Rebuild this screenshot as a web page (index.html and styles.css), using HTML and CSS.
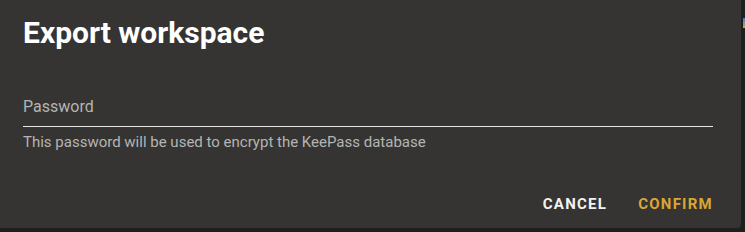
FILE: index.html
```html
<!DOCTYPE html>
<html lang="en">
  <head>
    <meta charset="UTF-8" />
    <meta name="viewport" content="width=device-width, initial-scale=1.0" />
    <title>Export workspace</title>
    <link rel="stylesheet" href="styles.css">
  </head>
  <body>
    <div class="backdrop">
      <div class="dialog">
        <h1 class="dialog-title">Export workspace</h1>

        <div class="field">
          <label class="field-input" for="password">Password</label>
          <div class="field-hint">This password will be used to encrypt the KeePass database</div>
        </div>

        <div class="dialog-actions">
          <button class="btn">Cancel</button>
          <button class="btn btn-primary">Confirm</button>
        </div>
      </div>
      <div class="side-strip">
        <span class="side-icon"></span>
      </div>
    </div>
  </body>
</html>
```

FILE: styles.css
```css
body {
  margin: 0;
  background: #1f1f1f;
  font-family: Roboto, "Liberation Sans", Arial, sans-serif;
}

.backdrop {
  display: flex;
  width: 745px;
  height: 232px;
}

.dialog {
  width: 741px;
  height: 228px;
  box-sizing: border-box;
  padding: 0 28px 0 23px;
  background: #353432;
  border-radius: 0 0 4px 0;
  display: flex;
  flex-direction: column;
}

.dialog-title {
  margin: 16px 0 0;
  font-size: 30px;
  line-height: 34px;
  font-weight: 700;
  color: #ffffff;
}

.field {
  margin-top: 47px;
}

.field-input {
  display: block;
  font-size: 16px;
  line-height: 20px;
  color: #b4b4b4;
  padding-bottom: 9px;
  border-bottom: 1px solid #e6e6e6;
}

.field-hint {
  margin-top: 7px;
  font-size: 15px;
  line-height: 16px;
  color: #b4b4b4;
}

.dialog-actions {
  margin-top: 36px;
  margin-right: -8px;
  display: flex;
  justify-content: flex-end;
  gap: 15px;
}

.btn {
  height: 36px;
  padding: 0 8px;
  border: none;
  background: none;
  font-family: inherit;
  font-size: 15px;
  line-height: 36px;
  font-weight: 700;
  letter-spacing: 1.25px;
  text-transform: uppercase;
  color: #f2f2f2;
}

.btn-primary {
  color: #d9a635;
}

.side-strip {
  position: relative;
  flex: 1;
}

.side-icon {
  position: absolute;
  left: 2px;
  top: 18px;
  width: 2px;
  height: 10px;
  background: linear-gradient(#3d7bd1, #e0a040);
}
```
